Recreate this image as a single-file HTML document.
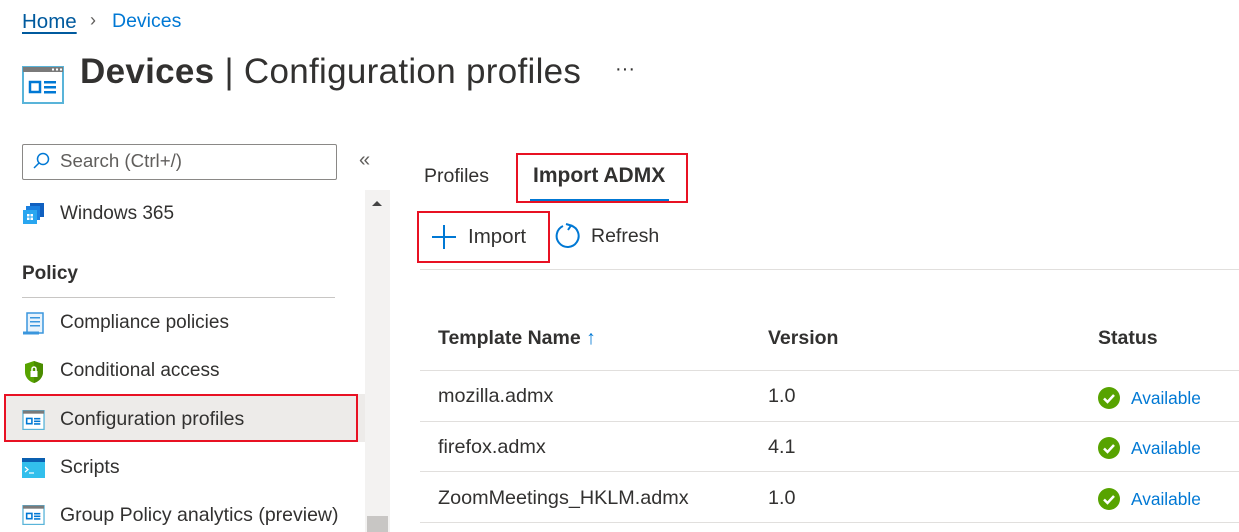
<!DOCTYPE html>
<html><head><meta charset="utf-8"><style>
*{margin:0;padding:0;box-sizing:border-box}
body{width:1239px;height:532px;overflow:hidden;background:#fff;font-family:"Liberation Sans",sans-serif;color:#323130;position:relative}
.a{position:absolute;white-space:nowrap}
.line{position:absolute;height:1px;background:#e1dfdd}
.red{position:absolute;border:2px solid #e81123}
</style></head><body>
<div class="a" style="left:22px;top:10px;font-size:20.5px;color:#005a9e;text-decoration:underline;text-underline-offset:4px">Home</div>
<div class="a" style="left:90px;top:10px;font-size:18px;color:#605e5c">&#8250;</div>
<div class="a" style="left:112px;top:10px;font-size:19.5px;color:#0078d4">Devices</div>
<svg class="a" style="left:22px;top:66px" width="42" height="38" viewBox="0 0 42 38"><rect x="1" y="1" width="40" height="36" fill="#fff" stroke="#59b4d9" stroke-width="2"/><rect x="1" y="1" width="40" height="5" fill="#7a7a7a"/><rect x="30" y="2.5" width="2" height="2" fill="#fff"/><rect x="34" y="2.5" width="2" height="2" fill="#fff"/><rect x="38" y="2.5" width="2" height="2" fill="#fff"/><rect x="8" y="16" width="10" height="10" fill="none" stroke="#0078d4" stroke-width="2.5"/><rect x="22" y="15" width="12" height="2.5" fill="#0078d4"/><rect x="22" y="20" width="12" height="2.5" fill="#0078d4"/><rect x="22" y="25" width="12" height="2.5" fill="#0078d4"/></svg>
<div class="a" style="left:80px;top:52px;font-size:35px;letter-spacing:0.3px;color:#323130"><b>Devices</b> | Configuration profiles</div>
<div class="a" style="left:615px;top:58px;font-size:20px;color:#323130">&middot;&middot;&middot;</div>

<div class="a" style="left:22px;top:144px;width:315px;height:36px;border:1px solid #8a8886;border-radius:2px"></div>
<svg class="a" style="left:32px;top:152px" width="18" height="18" viewBox="0 0 18 18"><circle cx="11" cy="7" r="5.5" fill="none" stroke="#0078d4" stroke-width="1.5"/><line x1="7" y1="11" x2="2" y2="16" stroke="#0078d4" stroke-width="1.5"/></svg>
<div class="a" style="left:60px;top:150px;font-size:18.7px;color:#605e5c">Search (Ctrl+/)</div>
<div class="a" style="left:359px;top:149px;font-size:20px;color:#605e5c">&#171;</div>

<div class="a" style="left:365px;top:190px;width:25px;height:342px;background:#f3f2f1"></div>
<svg class="a" style="left:371px;top:199px" width="12" height="8"><path d="M1 7L6 2L11 7Z" fill="#444"/></svg>
<div class="a" style="left:367px;top:516px;width:21px;height:16px;background:#c8c6c4"></div>

<svg class="a" style="left:22px;top:202px" width="24" height="24" viewBox="0 0 24 24"><rect x="8" y="1" width="14" height="14" fill="#1060c0"/><rect x="4" y="4" width="14" height="14" fill="#1a80e0"/><rect x="1" y="8" width="14" height="14" fill="#29a6f0"/><rect x="5" y="12" width="2.5" height="2.5" fill="#fff"/><rect x="8.5" y="12" width="2.5" height="2.5" fill="#fff"/><rect x="5" y="15.5" width="2.5" height="2.5" fill="#fff"/><rect x="8.5" y="15.5" width="2.5" height="2.5" fill="#fff"/></svg>
<div class="a" style="left:60px;top:203px;font-size:19px">Windows 365</div>
<div class="a" style="left:22px;top:263px;font-size:19px;font-weight:600">Policy</div>
<div class="line" style="left:22px;top:297px;width:313px;background:#c8c6c4"></div>

<svg class="a" style="left:22px;top:312px" width="24" height="24" viewBox="0 0 24 24"><rect x="5" y="1" width="16" height="20" fill="#e8f3fc" stroke="#3a96dd" stroke-width="1.5"/><path d="M1 21h16" stroke="#3a96dd" stroke-width="3"/><rect x="8" y="5" width="10" height="1.5" fill="#3a96dd"/><rect x="8" y="9" width="10" height="1.5" fill="#3a96dd"/><rect x="8" y="13" width="10" height="1.5" fill="#3a96dd"/></svg>
<div class="a" style="left:60px;top:312px;font-size:19px">Compliance policies</div>
<svg class="a" style="left:24px;top:360px" width="20" height="24" viewBox="0 0 20 24"><path d="M10 1L19 4V12C19 18 14 22 10 23C6 22 1 18 1 12V4Z" fill="#57a300"/><path d="M10 1L19 4V12C19 18 14 22 10 23Z" fill="#4a8c00"/><rect x="6.5" y="11" width="7" height="6" fill="#fff"/><path d="M8 11V9a2 2 0 0 1 4 0v2" fill="none" stroke="#fff" stroke-width="1.5"/></svg>
<div class="a" style="left:60px;top:360px;font-size:19px">Conditional access</div>

<div class="a" style="left:4px;top:394px;width:361px;height:48px;background:#edebe9"></div>
<div class="red" style="left:4px;top:394px;width:354px;height:48px"></div>
<svg class="a" style="left:22px;top:410px" width="23" height="20" viewBox="0 0 42 38"><rect x="1" y="1" width="40" height="36" fill="#fff" stroke="#59b4d9" stroke-width="2.5"/><rect x="1" y="1" width="40" height="6" fill="#7a7a7a"/><rect x="8" y="16" width="10" height="10" fill="none" stroke="#0078d4" stroke-width="3"/><rect x="22" y="15" width="12" height="3" fill="#0078d4"/><rect x="22" y="20" width="12" height="3" fill="#0078d4"/><rect x="22" y="25" width="12" height="3" fill="#0078d4"/></svg>
<div class="a" style="left:60px;top:408px;font-size:19.5px">Configuration profiles</div>
<svg class="a" style="left:22px;top:458px" width="23" height="20" viewBox="0 0 23 20"><rect width="23" height="20" fill="#32bfec"/><rect width="23" height="4" fill="#0a5fb0"/><path d="M3 9l3 2.5L3 14" stroke="#fff" stroke-width="1.2" fill="none"/><path d="M7 15h5" stroke="#fff" stroke-width="1.2"/></svg>
<div class="a" style="left:60px;top:456px;font-size:19.5px">Scripts</div>
<svg class="a" style="left:22px;top:505px" width="23" height="20" viewBox="0 0 42 38"><rect x="1" y="1" width="40" height="36" fill="#fff" stroke="#59b4d9" stroke-width="2.5"/><rect x="1" y="1" width="40" height="6" fill="#7a7a7a"/><rect x="8" y="16" width="10" height="10" fill="none" stroke="#0078d4" stroke-width="3"/><rect x="22" y="15" width="12" height="3" fill="#0078d4"/><rect x="22" y="20" width="12" height="3" fill="#0078d4"/><rect x="22" y="25" width="12" height="3" fill="#0078d4"/></svg>
<div class="a" style="left:60px;top:504px;font-size:19.5px">Group Policy analytics (preview)</div>

<div class="a" style="left:424px;top:165px;font-size:19.5px;color:#323130">Profiles</div>
<div class="a" style="left:533px;top:164px;font-size:21px;font-weight:600">Import ADMX</div>
<div class="a" style="left:530px;top:199px;width:139px;height:2px;background:#0078d4"></div>
<div class="red" style="left:516px;top:153px;width:172px;height:50px"></div>

<div class="red" style="left:417px;top:211px;width:133px;height:52px"></div>
<svg class="a" style="left:432px;top:225px" width="24" height="24"><path d="M12 0V24M0 12H24" stroke="#0078d4" stroke-width="2"/></svg>
<div class="a" style="left:468px;top:225px;font-size:20.5px">Import</div>
<svg class="a" style="left:555px;top:223px" width="26" height="26" viewBox="0 0 26 26"><path d="M8 3A11 11 0 1 0 16 2.5" fill="none" stroke="#0078d4" stroke-width="2"/><path d="M11 1L16 2.5L13 7" fill="none" stroke="#0078d4" stroke-width="2"/></svg>
<div class="a" style="left:591px;top:225px;font-size:19.5px">Refresh</div>
<div class="line" style="left:420px;top:269px;width:819px"></div>

<div class="a" style="left:438px;top:327px;font-size:19.5px;font-weight:600">Template Name <span style="font-weight:400;color:#0078d4">&#8593;</span></div>
<div class="a" style="left:768px;top:327px;font-size:19.5px;font-weight:600">Version</div>
<div class="a" style="left:1098px;top:327px;font-size:19.5px;font-weight:600">Status</div>
<div class="line" style="left:420px;top:370px;width:819px"></div>
<div class="line" style="left:420px;top:421px;width:819px"></div>
<div class="line" style="left:420px;top:471px;width:819px"></div>
<div class="line" style="left:420px;top:522px;width:819px"></div>

<div class="a" style="left:438px;top:385px;font-size:19.8px">mozilla.admx</div>
<div class="a" style="left:768px;top:385px;font-size:19.8px">1.0</div>
<div class="a" style="left:438px;top:436px;font-size:19.8px">firefox.admx</div>
<div class="a" style="left:768px;top:436px;font-size:19.8px">4.1</div>
<div class="a" style="left:438px;top:487px;font-size:19.8px">ZoomMeetings_HKLM.admx</div>
<div class="a" style="left:768px;top:487px;font-size:19.8px">1.0</div>

<svg class="a" style="left:1098px;top:387px" width="22" height="22"><circle cx="11" cy="11" r="11" fill="#57a300"/><path d="M6 11.5l3.5 3.5L16 8" stroke="#fff" stroke-width="2.5" fill="none"/></svg>
<div class="a" style="left:1131px;top:388px;font-size:17.3px;color:#0078d4">Available</div>
<svg class="a" style="left:1098px;top:437px" width="22" height="22"><circle cx="11" cy="11" r="11" fill="#57a300"/><path d="M6 11.5l3.5 3.5L16 8" stroke="#fff" stroke-width="2.5" fill="none"/></svg>
<div class="a" style="left:1131px;top:438px;font-size:17.3px;color:#0078d4">Available</div>
<svg class="a" style="left:1098px;top:488px" width="22" height="22"><circle cx="11" cy="11" r="11" fill="#57a300"/><path d="M6 11.5l3.5 3.5L16 8" stroke="#fff" stroke-width="2.5" fill="none"/></svg>
<div class="a" style="left:1131px;top:489px;font-size:17.3px;color:#0078d4">Available</div>
</body></html>
